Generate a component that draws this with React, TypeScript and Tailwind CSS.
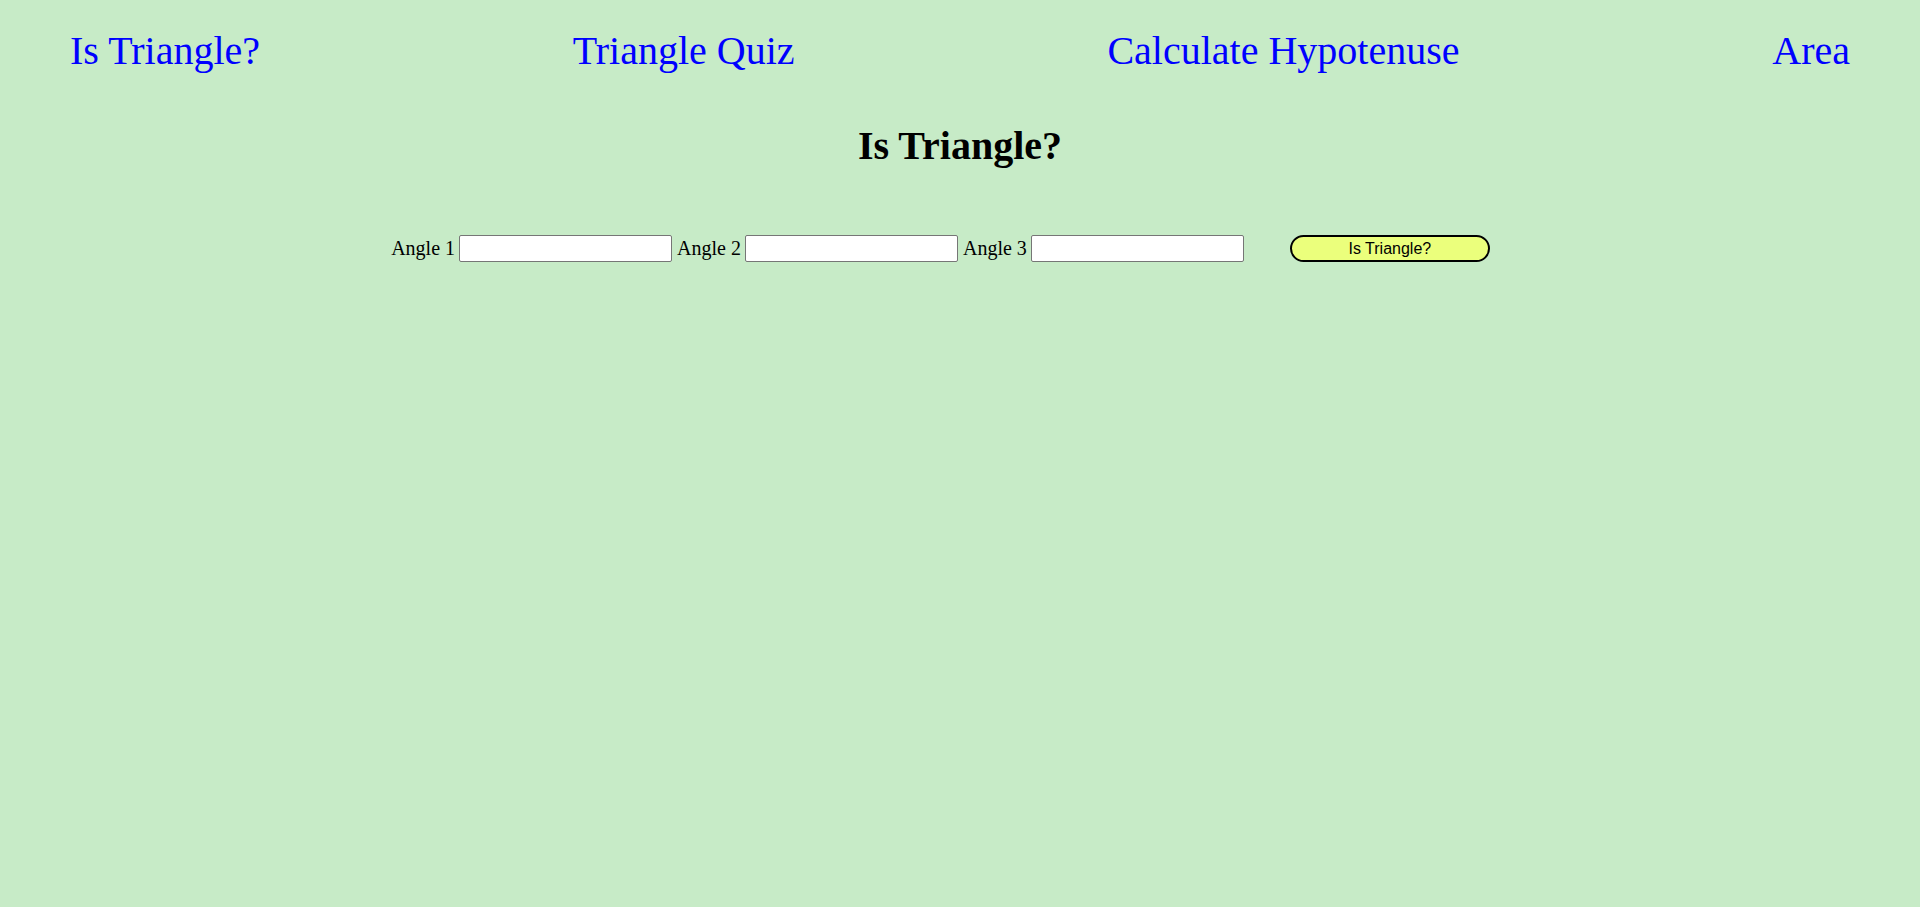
import React from 'react';

const links = ['Is Triangle?', 'Triangle Quiz', 'Calculate Hypotenuse', 'Area'];

const App = () => {
  return (
    <div className="min-h-screen w-full bg-[#c7ebc7] font-['Liberation_Serif','Times_New_Roman',serif] text-black">
      <nav className="flex justify-between px-[70px] pt-[28px]">
        {links.map((l) => (
          <a key={l} href="#" className="text-[40px] leading-[46px] text-[#0000ff] no-underline">
            {l}
          </a>
        ))}
      </nav>

      <h1 className="mt-[49px] text-center text-[40px] font-bold leading-[46px]">Is Triangle?</h1>

      <div className="mt-[66px] flex items-center justify-center gap-[4px] text-[20px] leading-[23px]">
        <label>Angle 1</label>
        <input type="text" className="h-[27px] w-[213px] rounded-[2px] border border-[#767676] bg-white px-1 outline-none" />
        <label className="pl-[1px]">Angle 2</label>
        <input type="text" className="h-[27px] w-[213px] rounded-[2px] border border-[#767676] bg-white px-1 outline-none" />
        <label className="pl-[1px]">Angle 3</label>
        <input type="text" className="h-[27px] w-[213px] rounded-[2px] border border-[#767676] bg-white px-1 outline-none" />
        <button className="ml-[42px] mr-[39px] h-[27px] w-[200px] rounded-full border-2 border-black bg-[#ebff7c] font-['Liberation_Sans',Arial,sans-serif] text-[16px] leading-[18px] text-black">
          Is Triangle?
        </button>
      </div>
    </div>
  );
};

export default App;
